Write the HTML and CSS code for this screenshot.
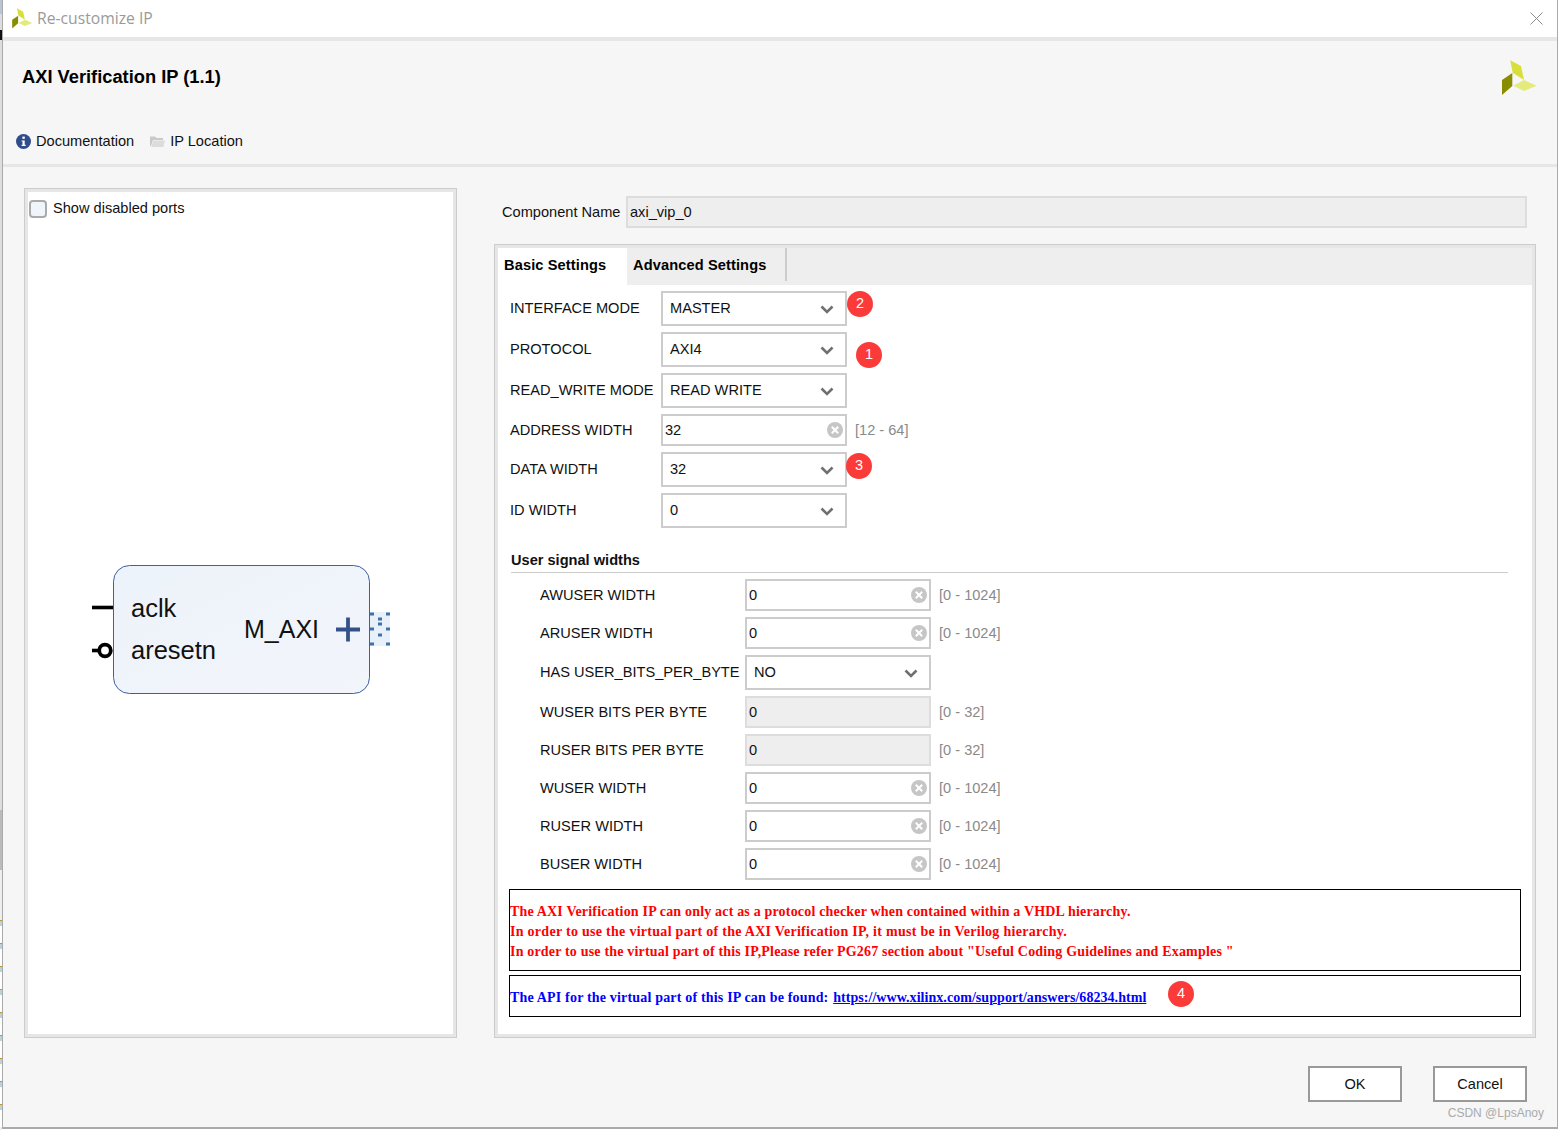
FILE: index.html
```html
<!DOCTYPE html>
<html lang="en">
<head>
<meta charset="utf-8">
<title>Re-customize IP</title>
<link rel="stylesheet" href="styles.css">
</head>
<body>
<svg class="defs" width="0" height="0" aria-hidden="true">
  <symbol id="logo" viewBox="0 0 38 38">
    <polygon points="10.3,2.3 21,8 24,22 12.7,14.7" fill="#d8df3a"/>
    <polygon points="12.3,15 2,22 2,37 12.3,28" fill="#8a8c00"/>
    <polygon points="13.3,27.7 24,22 36.7,27.7 24,33" fill="#e4ea7c"/>
  </symbol>
  <symbol id="clear" viewBox="0 0 16 16">
    <circle cx="8" cy="8" r="8" fill="#c6c6c6"/>
    <path d="M4.8 4.8l6.4 6.4M11.2 4.8l-6.4 6.4" stroke="#fff" stroke-width="2" fill="none"/>
  </symbol>
  <symbol id="chev" viewBox="0 0 14 9">
    <path d="M1.5 1.5L7 7l5.5-5.5" stroke="#707070" stroke-width="2.6" fill="none"/>
  </symbol>
</svg>
<div class="window">
  <div class="titlebar">
    <svg class="title-logo"><use href="#logo"/></svg>
    <span class="title-text">Re-customize IP</span>
    <svg class="close" viewBox="0 0 13 13"><path d="M.5.5l12 12M12.5.5l-12 12" stroke="#8a8a8a" stroke-width="1" fill="none"/></svg>
  </div>
  <header class="header">
    <div class="header-top">
      <h1 class="ip-title">AXI Verification IP (1.1)</h1>
      <svg class="big-logo"><use href="#logo"/></svg>
    </div>
    <div class="links">
      <span class="link">
        <svg class="link-icon" viewBox="0 0 15 15"><circle cx="7.5" cy="7.5" r="7.5" fill="#2f4d8a"/><rect x="6.4" y="2.6" width="2.4" height="2.2" fill="#fff"/><path d="M5.6 6.4h3.1v4.4h1v1.2H5.6v-1.2h.9V7.6h-.9z" fill="#fff"/></svg>
        Documentation
      </span>
      <span class="link">
        <svg class="link-icon" viewBox="0 0 15 15"><path d="M0 2.5h5l1.5 1.5H13v2H3L1 12H0z" fill="#c9c9c9"/><path d="M3.4 6.6H15l-1.6 6.4H1.4z" fill="#dcdcdc"/></svg>
        IP Location
      </span>
    </div>
  </header>
  <main class="main">
    <section class="symbol-panel">
      <label class="show-ports"><span class="checkbox"></span>Show disabled ports</label>
      <svg class="diagram" viewBox="0 0 425 140" width="425" height="140">
        <defs>
          <linearGradient id="blockfill" x1="0" y1="0" x2="1" y2="1">
            <stop offset="0" stop-color="#edf3fb"/>
            <stop offset="1" stop-color="#f2f5fa"/>
          </linearGradient>
        </defs>
        <rect x="85.500" y="0.500" width="256" height="128" rx="16" fill="url(#blockfill)" stroke="#3f5f9f"/>
        <path d="M64 42.500h21" stroke="#000" stroke-width="3.600"/>
        <path d="M64 85.500h9" stroke="#000" stroke-width="3.600"/>
        <circle cx="77" cy="85.500" r="5.800" fill="#fff" stroke="#000" stroke-width="3.800"/>
        <text class="pin-text" x="103" y="52">aclk</text>
        <text class="pin-text" x="103" y="94">aresetn</text>
        <text class="pin-text bus" x="216" y="73">M_AXI</text>
        <path d="M308 64.500h24M320 52.500v24" stroke="#34508a" stroke-width="3.800"/>
        <rect x="342" y="47" width="20" height="34" fill="#e8f1fa"/>
        <path d="M342 49h4M358 49h4M350 54h4M342 64h4M358 64h4M350 59h4M350 70h4M342 79h4M358 79h4" stroke="#3f72a8" stroke-width="3"/>
      </svg>
    </section>
    <section class="config">
      <div class="comp-row">
        <span class="comp-label">Component Name</span>
        <div class="comp-input">axi_vip_0</div>
      </div>
      <div class="tab-panel">
        <div class="tabs">
          <span class="tab active">Basic Settings</span>
          <span class="tab">Advanced Settings</span>
        </div>
        <div class="form">
          <div class="row"><span class="label">INTERFACE MODE</span><div class="ctl select">MASTER<svg class="chev"><use href="#chev"/></svg></div><span class="badge b2">2</span></div>
          <div class="row"><span class="label">PROTOCOL</span><div class="ctl select">AXI4<svg class="chev"><use href="#chev"/></svg></div><span class="badge b1">1</span></div>
          <div class="row"><span class="label">READ_WRITE MODE</span><div class="ctl select">READ WRITE<svg class="chev"><use href="#chev"/></svg></div></div>
          <div class="row"><span class="label">ADDRESS WIDTH</span><div class="ctl input">32<svg class="clear"><use href="#clear"/></svg></div><span class="range">[12 - 64]</span></div>
          <div class="row"><span class="label">DATA WIDTH</span><div class="ctl select">32<svg class="chev"><use href="#chev"/></svg></div><span class="badge b3">3</span></div>
          <div class="row"><span class="label">ID WIDTH</span><div class="ctl select">0<svg class="chev"><use href="#chev"/></svg></div></div>
          <h2 class="group-title">User signal widths</h2>
          <div class="row sub"><span class="label">AWUSER WIDTH</span><div class="ctl input">0<svg class="clear"><use href="#clear"/></svg></div><span class="range">[0 - 1024]</span></div>
          <div class="row sub"><span class="label">ARUSER WIDTH</span><div class="ctl input">0<svg class="clear"><use href="#clear"/></svg></div><span class="range">[0 - 1024]</span></div>
          <div class="row sub"><span class="label">HAS USER_BITS_PER_BYTE</span><div class="ctl select">NO<svg class="chev"><use href="#chev"/></svg></div></div>
          <div class="row sub"><span class="label">WUSER BITS PER BYTE</span><div class="ctl input disabled">0</div><span class="range">[0 - 32]</span></div>
          <div class="row sub"><span class="label">RUSER BITS PER BYTE</span><div class="ctl input disabled">0</div><span class="range">[0 - 32]</span></div>
          <div class="row sub"><span class="label">WUSER WIDTH</span><div class="ctl input">0<svg class="clear"><use href="#clear"/></svg></div><span class="range">[0 - 1024]</span></div>
          <div class="row sub"><span class="label">RUSER WIDTH</span><div class="ctl input">0<svg class="clear"><use href="#clear"/></svg></div><span class="range">[0 - 1024]</span></div>
          <div class="row sub"><span class="label">BUSER WIDTH</span><div class="ctl input">0<svg class="clear"><use href="#clear"/></svg></div><span class="range">[0 - 1024]</span></div>
        </div>
        <div class="note note-red">
          <div>The AXI Verification IP can only act as a protocol checker when contained within a VHDL hierarchy.</div>
          <div class="wide-line">In order to use the virtual part of the AXI Verification IP, it must be in Verilog hierarchy.</div>
          <div>In order to use the virtual part of this IP,Please refer PG267 section about "Useful Coding Guidelines and Examples "</div>
        </div>
        <div class="note note-blue">The API for the virtual part of this IP can be found: <a class="api-link" href="#">https://www.xilinx.com/support/answers/68234.html</a><span class="badge b4">4</span></div>
      </div>
    </section>
  </main>
  <footer class="footer">
    <button class="btn">OK</button>
    <button class="btn">Cancel</button>
    <span class="watermark">CSDN @LpsAnoy</span>
  </footer>
</div>
</body>
</html>
```

FILE: styles.css
```css
* { box-sizing: border-box; }
html, body { margin: 0; padding: 0; }
body {
  width: 1559px;
  height: 1130px;
  overflow: hidden;
  font-family: "Liberation Sans", Arial, sans-serif;
  font-size: 14.6px;
  color: #111;
  background-color: #fff;
  background-image:
    repeating-linear-gradient(to bottom, #c8941e 0 1px, #b8d4d8 1px 6px, #fff 6px 23px),
    linear-gradient(to bottom, #b9c4d8 0 14px, #ddd 14px 30px, #111 30px 40px, #ddd 40px 810px, #bbb 810px 870px, #eee 870px);
  background-size: 2px 207px, 2px 100%;
  background-position: 0 920px, 0 0;
  background-repeat: no-repeat;
}
.defs { position: absolute; }
.window {
  margin-left: 2px;
  width: 1556px;
  height: 1129px;
  border-left: 1px solid #aaa;
  border-right: 1px solid #aaa;
  border-bottom: 2px solid #aaa;
  background: #f6f6f6;
  display: flex;
  flex-direction: column;
}
.titlebar {
  height: 41px;
  flex: none;
  background: #fff;
  border-bottom: 4px solid #e6e6e6;
  display: flex;
  align-items: center;
  padding-left: 8px;
  padding-right: 14px;
  padding-bottom: 1px;
}
.title-logo { width: 22px; height: 22px; }
.title-text {
  margin-left: 4px;
  font-family: "Open Sans", sans-serif;
  font-size: 15.700px;
  color: #9a9a9a;
}
.close { width: 13px; height: 13px; margin-left: auto; }
.header {
  height: 126px;
  flex: none;
  border-bottom: 3px solid #e6e6e6;
  padding: 0 19px 0 13px;
  display: flex;
  flex-direction: column;
}
.header-top {
  height: 81px;
  display: flex;
  padding-left: 6px;
  justify-content: space-between;
}
.ip-title {
  margin: 24px 0 0;
  font-size: 18.300px;
  line-height: 24px;
  font-weight: 700;
  color: #000;
}
.big-logo { width: 38px; height: 38px; margin-top: 17px; }
.links { display: flex; gap: 16px; margin-top: 9px; }
.link { display: flex; align-items: center; gap: 5px; line-height: 20px; }
.link-icon { width: 15px; height: 15px; margin-top: 1px; }
.main {
  flex: 1;
  display: flex;
  gap: 37px;
  padding: 21px 0 0 21px;
}
.symbol-panel {
  width: 433px;
  height: 850px;
  background: #fff;
  border: 1px solid #ccc;
  box-shadow: inset 0 0 0 3px #e6e6e6;
  padding: 3px;
}
.show-ports { display: flex; align-items: center; gap: 6px; padding: 5px 0 0 1px; height: 26px; }
.checkbox {
  width: 18px;
  height: 18px;
  margin-top: 2px;
  border: 2px solid #aaa;
  border-radius: 4px;
  background: #f0f5fb;
}
.diagram { display: block; margin-top: 347px; }
.pin-text { font-family: "Liberation Sans", Arial, sans-serif; font-size: 25.500px; fill: #111; }
.pin-text.bus { font-size: 25px; }
.config { width: 1042px; display: flex; flex-direction: column; }
.comp-row { display: flex; align-items: center; gap: 5px; margin: 8px 9px 16px 8px; height: 32px; }
.comp-label { white-space: nowrap; width: 119px; }
.comp-input {
  flex: 1;
  height: 32px;
  line-height: 28px;
  padding-left: 2px;
  background: #eee;
  border: 2px solid #ddd;
}
.tab-panel {
  height: 794px;
  background: #fff;
  border: 1px solid #ccc;
  box-shadow: inset 0 0 0 3px #e6e6e6;
  padding: 3px;
}
.tabs {
  height: 37px;
  display: flex;
  background: #eee;
}
.tab {
  font-weight: 700;
  letter-spacing: .12px;
  color: #000;
  line-height: 35px;
  padding: 0 0 0 6px;
  white-space: nowrap;
}
.tab.active { background: #fff; width: 129px; }
.tab:not(.active) { width: 160px; border-right: 2px solid #ccc; height: 33px; }
.form {
  padding: 6px 24px 0 12px;
  display: flex;
  flex-direction: column;
  gap: 6px;
}
.row { display: flex; align-items: center; position: relative; }
.label { width: 151px; flex: none; white-space: nowrap; }
.row:has(.select) .label { padding-bottom: 2px; }
.row.sub .label { width: 235px; padding-left: 30px; }
.ctl {
  width: 186px;
  flex: none;
  background: #fff;
  border: 2px solid #ccc;
  display: flex;
  align-items: center;
  justify-content: space-between;
}
.select { height: 35px; padding: 0 11px 2px 7px; }
.input { height: 32px; padding: 0 2px 0 2px; }
.input.disabled { background: #eee; border-color: #ddd; }
.chev { width: 14px; height: 9px; margin-top: 4px; }
.clear { width: 16px; height: 16px; }
.range { margin-left: 8px; color: #8a8a8a; }
.group-title {
  margin: 16px 0 0 1px;
  height: 23px;
  font-size: 14.6px;
  line-height: 20px;
  font-weight: 700;
  color: #111;
  border-bottom: 1px solid #ccc;
}
.badge {
  position: absolute;
  width: 26px;
  height: 26px;
  border-radius: 50%;
  background: #fb3a3a;
  color: #fff;
  font-size: 14.5px;
  line-height: 24px;
  text-align: center;
}
.b2 { left: 337px; top: 0; }
.b1 { left: 346px; top: 10px; }
.b3 { left: 336px; top: 1px; }
.b4 { left: 658px; top: 5px; font-family: "Liberation Sans", Arial, sans-serif; font-weight: 400; letter-spacing: 0; }
.note {
  margin: 0 11px;
  border: 1px solid #000;
  font-family: "Liberation Serif", "Times New Roman", serif;
  font-weight: 700;
  font-size: 14px;
  letter-spacing: .18px;
  line-height: 20px;
}
.wide-line { letter-spacing: .285px; }
.note-red { color: #f00; height: 82px; margin-top: 9px; padding-top: 12px; }
.note-blue { color: #00f; height: 42px; margin-top: 4px; padding-top: 12px; position: relative; }
.api-link { color: #00f; letter-spacing: .05px; margin-left: 1px; }
.footer {
  height: 91px;
  flex: none;
  position: relative;
  display: flex;
  justify-content: flex-end;
  gap: 31px;
  padding: 28px 30px 0 0;
}
.btn {
  width: 94px;
  height: 36px;
  background: #fff;
  border: 2px solid #999;
  font-family: inherit;
  font-size: 14.6px;
  color: #111;
  padding: 0;
}
.watermark {
  position: absolute;
  right: 13px;
  top: 68px;
  font-size: 12px;
  color: #aaa;
}
```
